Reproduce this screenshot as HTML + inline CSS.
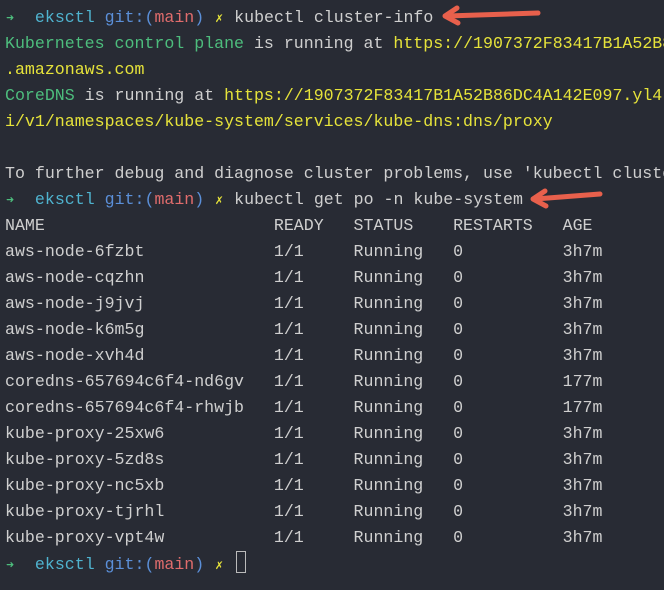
<!DOCTYPE html>
<html><head><meta charset="utf-8"><style>
html,body{margin:0;padding:0;width:664px;height:590px;overflow:hidden;}
body{background:#282b34;position:relative;
font-family:"Liberation Mono",monospace;font-size:16.6px;color:#cfcfcf;}
.l{position:absolute;left:5px;white-space:pre;line-height:26px;height:26px;width:659px;overflow:hidden;}
.g{color:#4dbd7d}.c{color:#4fb3cf}.b{color:#5b8fd8}.r{color:#e06c6c}.y{color:#e6e33a}.gr{color:#4dbd7d}
.s{display:inline-block;width:10px;text-align:center;font-size:13px}
.cur{display:inline-block;width:8px;height:20px;border:1.5px solid #bbb;vertical-align:-4px;margin-left:2px}
</style></head><body>
<div class="l" style="top:5px"><span class="g s">➜</span>  <span class="c">eksctl</span> <span class="b">git:(</span><span class="r">main</span><span class="b">)</span> <span class="y s">✗</span> kubectl cluster-info</div>
<div class="l" style="top:31px"><span class="gr">Kubernetes control plane</span> is running at <span class="y">https://1907372F83417B1A52B86DC4A142E097.yl4</span></div>
<div class="l" style="top:57px"><span class="y">.amazonaws.com</span></div>
<div class="l" style="top:83px"><span class="gr">CoreDNS</span> is running at <span class="y">https://1907372F83417B1A52B86DC4A142E097.yl4</span></div>
<div class="l" style="top:109px"><span class="y">i/v1/namespaces/kube-system/services/kube-dns:dns/proxy</span></div>
<div class="l" style="top:161px">To further debug and diagnose cluster problems, use 'kubectl cluster-info dump'.</div>
<div class="l" style="top:187px"><span class="g s">➜</span>  <span class="c">eksctl</span> <span class="b">git:(</span><span class="r">main</span><span class="b">)</span> <span class="y s">✗</span> kubectl get po -n kube-system</div>
<div class="l" style="top:213px">NAME                       READY   STATUS    RESTARTS   AGE</div>
<div class="l" style="top:239px">aws-node-6fzbt             1/1     Running   0          3h7m</div>
<div class="l" style="top:265px">aws-node-cqzhn             1/1     Running   0          3h7m</div>
<div class="l" style="top:291px">aws-node-j9jvj             1/1     Running   0          3h7m</div>
<div class="l" style="top:317px">aws-node-k6m5g             1/1     Running   0          3h7m</div>
<div class="l" style="top:343px">aws-node-xvh4d             1/1     Running   0          3h7m</div>
<div class="l" style="top:369px">coredns-657694c6f4-nd6gv   1/1     Running   0          177m</div>
<div class="l" style="top:395px">coredns-657694c6f4-rhwjb   1/1     Running   0          177m</div>
<div class="l" style="top:421px">kube-proxy-25xw6           1/1     Running   0          3h7m</div>
<div class="l" style="top:447px">kube-proxy-5zd8s           1/1     Running   0          3h7m</div>
<div class="l" style="top:473px">kube-proxy-nc5xb           1/1     Running   0          3h7m</div>
<div class="l" style="top:499px">kube-proxy-tjrhl           1/1     Running   0          3h7m</div>
<div class="l" style="top:525px">kube-proxy-vpt4w           1/1     Running   0          3h7m</div>
<div class="l" style="top:551px"><span class="g s">➜</span>  <span class="c">eksctl</span> <span class="b">git:(</span><span class="r">main</span><span class="b">)</span> <span class="y s">✗</span> <span class="cur"></span></div>
<svg style="position:absolute;left:0;top:0" width="664" height="590">
<g stroke="#e8604c" stroke-width="5" stroke-linecap="round" stroke-linejoin="round" fill="none">
<path d="M447 16 L538 13"/><path d="M457 8 L445 16 L458 23"/>
<path d="M535 199 L600 194"/><path d="M545 191 L533 199 L546 206"/>
</g></svg>
</body></html>
